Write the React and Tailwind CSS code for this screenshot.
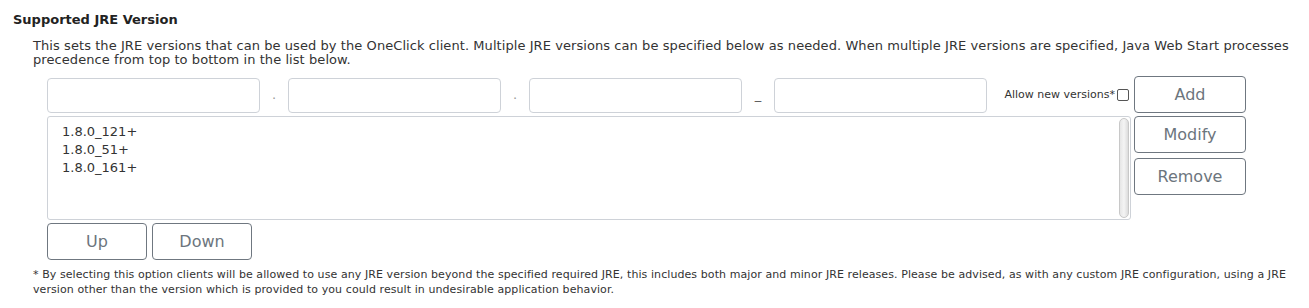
import React from "react";

const versions = ["1.8.0_121+", "1.8.0_51+", "1.8.0_161+"];

const Btn = ({ children, className = "" }) => (
  <button
    className={`h-[37px] rounded-[4px] border border-[#6f7780] bg-white text-[16px] text-[#6c757d] ${className}`}
    style={{ fontFamily: "'DejaVu Sans', Verdana, sans-serif" }}
  >
    {children}
  </button>
);

const Field = () => (
  <input
    type="text"
    className="h-[35px] w-[213px] rounded-[4px] border border-[#ced2d8] bg-white outline-none"
  />
);

export default function App() {
  return (
    <div
      className="h-[308px] w-[1309px] bg-white text-[#333]"
      style={{ fontFamily: "'DejaVu Sans', Verdana, sans-serif" }}
    >
      <div className="pl-[13px] pt-[12px] text-[13px] font-bold leading-[16px] text-[#222]">
        Supported JRE Version
      </div>
      <p className="ml-[33px] mt-[11px] mr-[14px] text-[13px] leading-[14px] tracking-[0.07px] text-[#333]">
        This sets the JRE versions that can be used by the OneClick client. Multiple JRE versions can be specified below as needed. When multiple JRE versions are specified, Java Web Start processes precedence from top to bottom in the list below.
      </p>

      <div className="ml-[47px] mt-[9px] flex">
        {/* left column */}
        <div className="w-[1084px]">
          <div className="flex h-[37px] items-center pt-[1px]">
            <Field />
            <span className="w-[28px] text-center text-[13px] text-[#999]">.</span>
            <Field />
            <span className="w-[28px] text-center text-[13px] text-[#999]">.</span>
            <Field />
            <span className="w-[32px] text-center text-[13px] text-[#555]">_</span>
            <Field />
            <div className="ml-auto flex items-center gap-[2px] pr-[2px]">
              <span className="text-[11px] text-[#333]">Allow new versions*</span>
              <span className="inline-block h-[12px] w-[12px] rounded-[2px] border border-[#555] bg-white" />
            </div>
          </div>

          <div className="relative mt-[3px] h-[104px] w-[1084px] rounded-[3px] border border-[#ced2d8] bg-white pl-[14px] pt-[6px]">
            {versions.map((v) => (
              <div key={v} className="text-[13px] leading-[18px] text-[#333]">
                {v}
              </div>
            ))}
            <div className="absolute right-[1px] top-[1px] h-[100px] w-[10px] rounded-[5px] border border-[#c8c8c8] bg-gradient-to-r from-[#e6e6e6] via-[#f4f4f4] to-[#dcdcdc]" />
          </div>

          <div className="mt-[3px] flex gap-[5px]">
            <Btn className="w-[100px]">Up</Btn>
            <Btn className="w-[100px]">Down</Btn>
          </div>
        </div>

        {/* right column */}
        <div className="ml-[3px] flex w-[112px] flex-col">
          <Btn className="w-[112px]">Add</Btn>
          <Btn className="mt-[3px] w-[112px]">Modify</Btn>
          <Btn className="mt-[5px] w-[112px]">Remove</Btn>
        </div>
      </div>

      <p className="ml-[33px] mt-[7px] mr-[14px] text-[11px] leading-[15px] tracking-[0.08px] text-[#333]">
        * By selecting this option clients will be allowed to use any JRE version beyond the specified required JRE, this includes both major and minor JRE releases. Please be advised, as with any custom JRE configuration, using a JRE version other than the version which is provided to you could result in undesirable application behavior.
      </p>
    </div>
  );
}
